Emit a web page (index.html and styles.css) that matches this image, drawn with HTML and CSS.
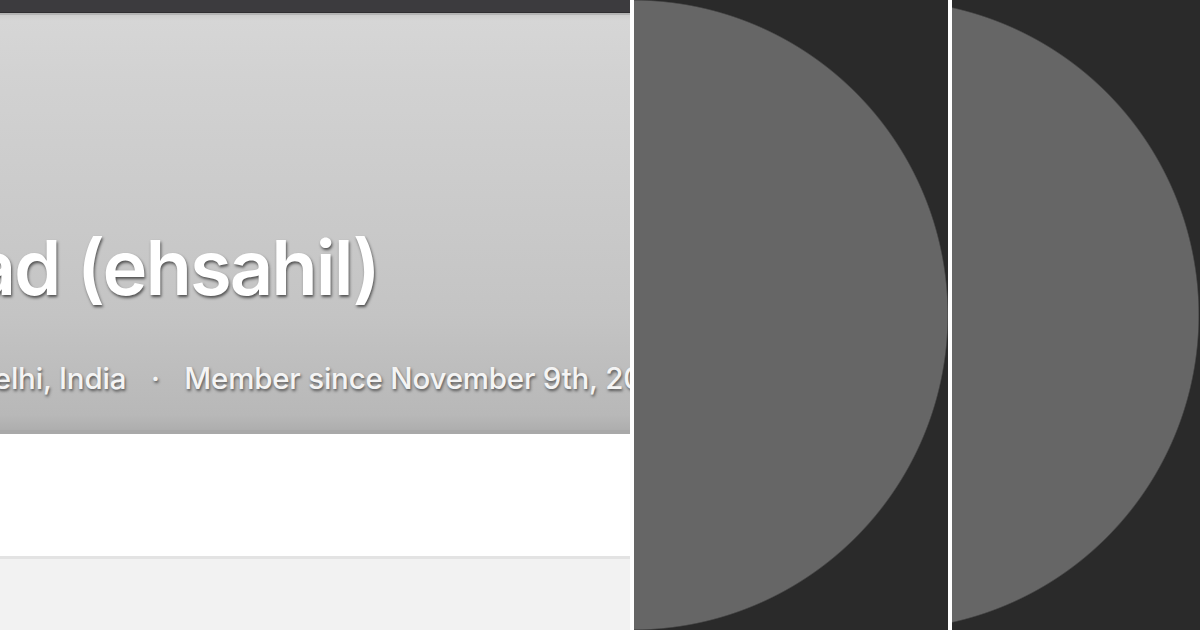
FILE: index.html
```html
<!DOCTYPE html>
<html>
<head>
<meta charset="utf-8">
<link rel="stylesheet" href="styles.css">
</head>
<body>
<div class="page">
  <section class="profile">
    <div class="topbar"></div>
    <header class="hero">
      <h1 class="name">Sahil Ahamad (ehsahil)</h1>
      <p class="meta">New Delhi, India <span class="dot">·</span> Member since November 9th, 2017</p>
    </header>
    <div class="blank"></div>
    <div class="footer"></div>
  </section>
  <section class="shot shot-a"></section>
  <section class="shot shot-b"></section>
</div>
</body>
</html>
```
FILE: styles.css
```css
html, body {
  margin: 0;
  padding: 0;
  background: #ffffff;
}
.page {
  display: flex;
  gap: 4px;
  width: 1200px;
  height: 630px;
  overflow: hidden;
  background: #ffffff;
}
.profile {
  width: 630px;
  flex: none;
  display: flex;
  flex-direction: column;
  overflow: hidden;
  font-family: Inter, "Liberation Sans", sans-serif;
}
.topbar {
  height: 12px;
  background: #3c3b3e;
  border-bottom: 1px solid #2e2d30;
  flex: none;
}
.hero {
  flex: none;
  height: 415px;
  border-top: 2px solid #b3b3b3;
  border-bottom: 4px solid #a9a9a9;
  background: linear-gradient(to bottom, #cdcdcd 0px, #d6d6d6 6px, #d2d2d2 60px, #c4c4c4 300px, #b8b8b8 400px, #aeaeae 415px);
  display: flex;
  flex-direction: column;
  overflow: hidden;
  color: #ffffff;
}
.name {
  margin: 207px 0 0 -420px;
  font-size: 76px;
  font-weight: 600;
  letter-spacing: -2px;
  line-height: 90px;
  white-space: nowrap;
  text-shadow: 1px 2px 3px rgba(0, 0, 0, 0.6);
}
.meta {
  margin: 46px 0 0 -98px;
  font-size: 29.5px;
  font-weight: 500;
  letter-spacing: -0.2px;
  line-height: 40px;
  white-space: nowrap;
  color: #f4f4f4;
  text-shadow: 1px 2px 3px rgba(0, 0, 0, 0.55);
}
.dot {
  margin: 0 17px;
}
.blank {
  height: 122px;
  flex: none;
  background: #ffffff;
}
.footer {
  flex: 1;
  border-top: 3px solid #e3e3e3;
  background: #f2f2f2;
}
.shot {
  flex: none;
  height: 630px;
}
.shot-a {
  width: 314px;
  background: radial-gradient(circle 315px at -1px 315px, #666666 314px, #2a2a2a 315.5px);
}
.shot-b {
  width: 248px;
  background: radial-gradient(circle 315px at -68px 315px, #666666 314px, #2a2a2a 315.5px);
}
```
